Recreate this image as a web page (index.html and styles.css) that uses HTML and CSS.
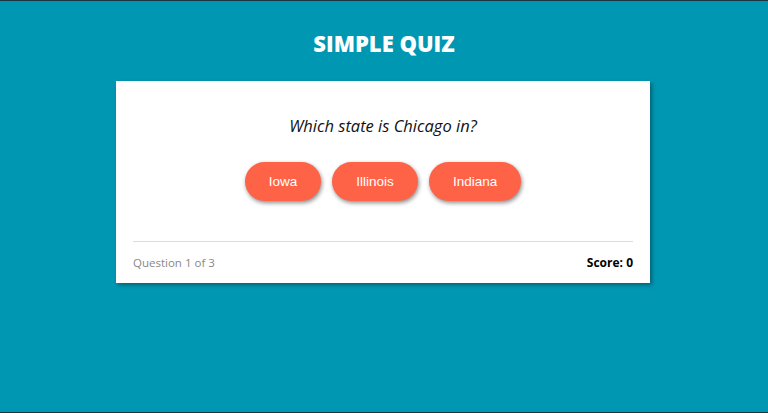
FILE: index.html
```html
<!DOCTYPE html>
<html>
<head>
	<meta charset=utf-8>
	<title>Simple Quiz</title>
	<link rel="stylesheet" href="styles.css">
</head>
<body>
<main class=app>
	<h1 class=title>SIMPLE QUIZ</h1>
	<section class=quiz>
		<p class=question>Which state is Chicago in?</p>
		<div class=answers>
			<button class=answer>Iowa</button>
			<button class=answer>Illinois</button>
			<button class=answer>Indiana</button>
		</div>
		<footer class=status>
			<span class=progress>Question 1 of 3</span>
			<span class=score>Score: 0</span>
		</footer>
	</section>
</main>
</body>
</html>
```

FILE: styles.css
```css
* {
	margin: 0;
	padding: 0;
	box-sizing: border-box;
}
body {
	background: #0097b2;
	font-family: "Open Sans", sans-serif;
}
.app {
	height: 413px;
	border-top: 1px solid #1b3640;
	border-bottom: 1px solid #1b3640;
	display: flex;
	flex-direction: column;
	align-items: center;
}
.title {
	color: white;
	font-size: 22px;
	font-weight: 800;
	margin-top: 27px;
	line-height: 30px;
}
.quiz {
	width: 534px;
	margin-top: 23px;
	margin-right: 2px;
	background: white;
	padding: 0 17px;
	box-shadow: 2px 2px 4px rgba(0, 0, 0, .35);
}
.question {
	text-align: center;
	font-style: italic;
	font-size: 16.5px;
	color: #111;
	margin-top: 33px;
	line-height: 24px;
}
.answers {
	display: flex;
	justify-content: center;
	gap: 11px;
	margin-top: 24px;
	padding-bottom: 40px;
	border-bottom: 1px solid #ddd;
}
.answer {
	border: none;
	background: #ff6347;
	color: white;
	font-family: "Liberation Sans", Arial, sans-serif;
	font-size: 13.5px;
	height: 39px;
	padding: 0 24px;
	border-radius: 20px;
	box-shadow: 1px 2px 4px rgba(0, 0, 0, .45);
}
.status {
	display: flex;
	justify-content: space-between;
	align-items: center;
	height: 41px;
	font-size: 12px;
}
.progress {
	color: #888;
	font-size: 11.5px;
}
.score {
	font-weight: 700;
	color: #000;
}
```
